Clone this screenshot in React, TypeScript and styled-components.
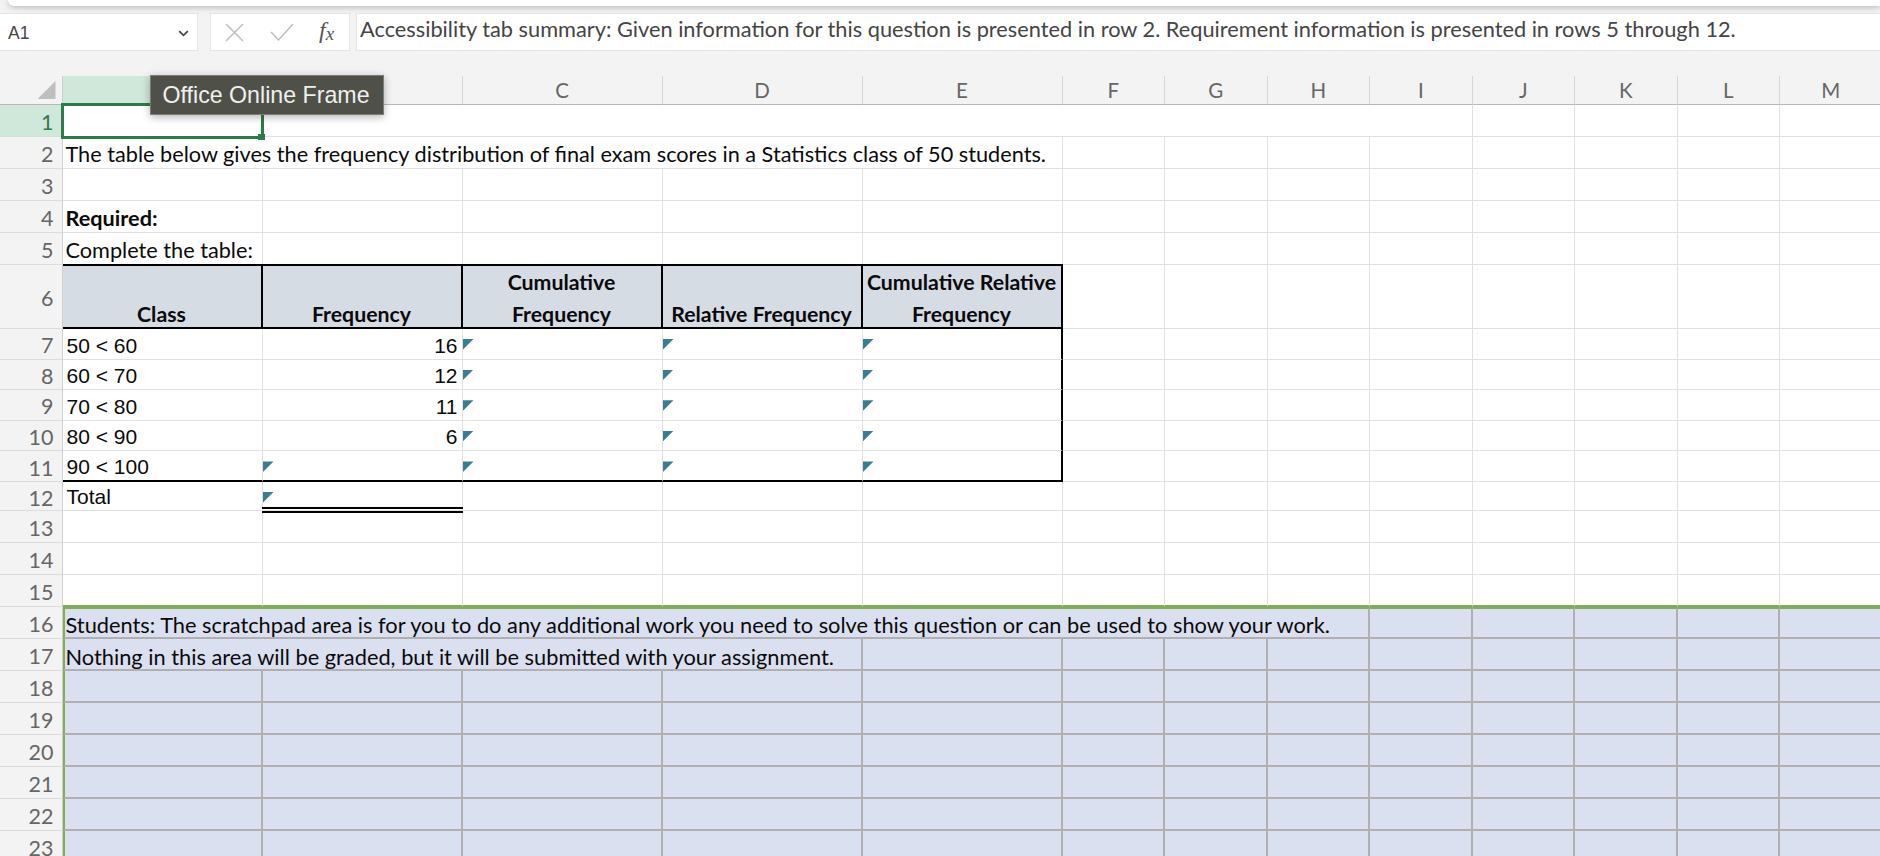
import React from "react";
import styled, { createGlobalStyle } from "styled-components";

const GlobalStyle = createGlobalStyle`
  html, body {
    margin: 0;
    height: 100%;
    overflow: hidden;
    background: #f3f3f3;
  }
  * {
    box-sizing: border-box;
  }
`;

const Page = styled.div`
  width: 1880px;
  height: 856px;
  overflow: hidden;
  background: #f3f3f3;
  font-family: "Lato", "Liberation Sans", sans-serif;
`;

const TopBar = styled.div`
  height: 6px;
  margin: 0 0 7px 8px;
  background: white;
  border-bottom-left-radius: 10px;
  box-shadow: 0 1px 6px rgba(0, 0, 0, 0.28);
`;

const FormulaBar = styled.div`
  display: flex;
  height: 38px;
  margin-bottom: 25px;
`;

const NameBox = styled.div`
  width: 198px;
  display: flex;
  align-items: center;
  justify-content: space-between;
  padding: 2px 8px 0;
  margin-right: 12px;
  background: white;
  border: 1px solid #e4e4e4;
  border-left: none;
  font-family: "Liberation Sans", sans-serif;
  font-size: 17.5px;
  color: #444;
`;

const FxBox = styled.div`
  width: 140px;
  display: flex;
  align-items: center;
  padding-left: 14px;
  margin-right: 6px;
  background: white;
  border: 1px solid #e4e4e4;
`;

const FxLabel = styled.span`
  margin: 0 0 4px 25px;
  font-family: "Liberation Serif", serif;
  font-style: italic;
  font-size: 24px;
  line-height: 24px;
  color: #555;
  > sub {
    font-size: 19px;
    line-height: 0;
    vertical-align: -2px;
  }
`;

const FormulaInput = styled.div`
  flex: 1;
  padding-left: 3px;
  background: white;
  border: 1px solid #e4e4e4;
  border-right: none;
  font-size: 21.78px;
  line-height: 31px;
  color: #444;
  white-space: nowrap;
`;

const Sheet = styled.div`
  display: grid;
  grid-template-columns: 62.5px repeat(5, 200px) repeat(8, 102.5px);
  grid-template-rows:
    29px repeat(5, 32px) 64px repeat(5, 30.6px) 29.5px repeat(3, 31.83px)
    repeat(8, 32px);
`;

const Corner = styled.div`
  display: flex;
  justify-content: flex-end;
  padding: 5px 6px 0 0;
  border-right: 1px solid #cfcfcf;
  border-bottom: 1px solid #b8b8b8;
  > i {
    width: 18px;
    height: 18px;
    background: #bfbfbf;
    clip-path: polygon(100% 0, 100% 100%, 0 100%);
  }
`;

const ColHeader = styled.div<{ $active?: boolean }>`
  position: relative;
  display: flex;
  align-items: center;
  justify-content: center;
  background: ${(p) => (p.$active ? "#cfe8d9" : "transparent")};
  border-right: 1px solid #d6d6d6;
  border-bottom: 1px solid #b8b8b8;
  font-size: 20.5px;
  color: #666;
`;

const Tooltip = styled.div`
  position: absolute;
  left: 87px;
  top: -1px;
  z-index: 5;
  width: 234.5px;
  height: 40px;
  display: flex;
  align-items: center;
  padding-left: 12px;
  background: #4f5148;
  border: 1px solid #7b7d76;
  box-shadow: 0 2px 8px rgba(0, 0, 0, 0.3);
  font-family: "Liberation Sans", sans-serif;
  font-size: 23.2px;
  color: #f0f0ee;
  white-space: nowrap;
`;

const RowHeader = styled.div<{ $active?: boolean }>`
  display: flex;
  align-items: center;
  justify-content: flex-end;
  padding: 3px 8px 0 0;
  background: ${(p) => (p.$active ? "#cfe8d9" : "transparent")};
  border-right: 1px solid #cfcfcf;
  border-bottom: 1px solid #dcdcdc;
  font-size: 21.5px;
  color: ${(p) => (p.$active ? "#2f7a4b" : "#666")};
`;

const Cell = styled.div<{ $span?: number }>`
  position: relative;
  grid-column: span ${(p) => p.$span || 1};
  display: flex;
  align-items: flex-end;
  min-width: 0;
  padding: 0 4px 0 3px;
  background: white;
  border-right: 1px solid #e0e0e0;
  border-bottom: 1px solid #e0e0e0;
  font-size: 21.7px;
  line-height: 27px;
  color: #0a0a0a;
  white-space: nowrap;
`;

const BottomCell = styled(Cell)`
  border-bottom: 2px solid #7fae57;
`;

const HeadCell = styled(Cell)`
  justify-content: center;
  margin-top: -1px;
  padding: 0 2px;
  background: #d6dce4;
  border-top: 2px solid #000;
  border-right: 2px solid #000;
  border-bottom: 2px solid #000;
  font-size: 21.3px;
  font-weight: 700;
  line-height: 32px;
  text-align: center;
`;

const HeadLabel = styled.span`
  display: block;
  margin-bottom: -3px;
`;

const BodyCell = styled(Cell)<{ $right?: boolean; $edge?: boolean; $end?: boolean }>`
  justify-content: ${(p) => (p.$end ? "flex-end" : "flex-start")};
  padding: 0 4px;
  font-family: "Liberation Sans", sans-serif;
  font-size: 21px;
  border-right: ${(p) => (p.$right ? "2px solid #000" : "1px solid #e0e0e0")};
  border-bottom: ${(p) => (p.$edge ? "2px solid #000" : "1px solid #e0e0e0")};
`;

const ScratchCell = styled(Cell)<{ $first?: boolean; $top?: boolean }>`
  background: #dae0f0;
  border-right: 2px solid #b0b0b0;
  border-bottom: 2px solid #b0b0b0;
  border-left: ${(p) => (p.$first ? "2px solid #7fae57" : "none")};
  border-top: ${(p) => (p.$top ? "2px solid #7fae57" : "none")};
  padding-left: ${(p) => (p.$first ? "1px" : "4px")};
  font-size: 21.8px;
  line-height: 25px;
`;

const Selection = styled.div`
  position: absolute;
  left: -2px;
  top: -2px;
  z-index: 3;
  width: 203.5px;
  height: 35.5px;
  border: 3px solid #2f7a4b;
  > i {
    position: absolute;
    right: -4px;
    bottom: -4px;
    width: 7px;
    height: 6px;
    background: #2f7a4b;
  }
`;

const Marker = styled.i`
  position: absolute;
  left: 0;
  top: 10px;
  width: 11px;
  height: 11px;
  background: #3a7d90;
  clip-path: polygon(0 0, 100% 0, 0 100%);
`;

const DoubleLine = styled.i`
  position: absolute;
  z-index: 2;
  left: -1px;
  right: -1px;
  bottom: -3px;
  height: 6px;
  border-top: 2px solid #000;
  border-bottom: 2px solid #000;
`;

const COLUMNS = "ABCDEFGHIJKLM".split("");

const blanks = (count: number, Comp: typeof Cell = Cell) =>
  Array.from({ length: count }, (_, i) => <Comp key={"blank" + i} />);

const CLASSES = [
  ["50 < 60", "16"],
  ["60 < 70", "12"],
  ["70 < 80", "11"],
  ["80 < 90", "6"],
  ["90 < 100", ""],
];

function App() {
  const rows: React.ReactNode[] = [];

  const pushRow = (n: number, cells: React.ReactNode, active?: boolean) => {
    rows.push(
      <React.Fragment key={n}>
        <RowHeader $active={active}>{n}</RowHeader>
        {cells}
      </React.Fragment>
    );
  };

  pushRow(
    1,
    <>
      <Cell $span={9}>
        <Selection>
          <i />
        </Selection>
      </Cell>
      {blanks(4)}
    </>,
    true
  );
  pushRow(
    2,
    <>
      <Cell $span={5}>
        The table below gives the frequency distribution of final exam scores in a Statistics
        class of 50 students.
      </Cell>
      {blanks(8)}
    </>
  );
  pushRow(3, blanks(13));
  pushRow(
    4,
    <>
      <Cell>
        <b>Required:</b>
      </Cell>
      {blanks(12)}
    </>
  );
  pushRow(
    5,
    <>
      <Cell>Complete the table:</Cell>
      {blanks(12)}
    </>
  );
  pushRow(
    6,
    <>
      <HeadCell>
        <HeadLabel>Class</HeadLabel>
      </HeadCell>
      <HeadCell>
        <HeadLabel>Frequency</HeadLabel>
      </HeadCell>
      <HeadCell>
        <HeadLabel>
          Cumulative
          <br />
          Frequency
        </HeadLabel>
      </HeadCell>
      <HeadCell>
        <HeadLabel>Relative Frequency</HeadLabel>
      </HeadCell>
      <HeadCell>
        <HeadLabel>
          Cumulative Relative
          <br />
          Frequency
        </HeadLabel>
      </HeadCell>
      {blanks(8)}
    </>
  );

  CLASSES.forEach(([label, freq], i) => {
    const last = i === CLASSES.length - 1;
    pushRow(
      7 + i,
      <>
        <BodyCell $edge={last}>{label}</BodyCell>
        <BodyCell $edge={last} $end>
          {freq ? freq : <Marker />}
        </BodyCell>
        <BodyCell $edge={last}>
          <Marker />
        </BodyCell>
        <BodyCell $edge={last}>
          <Marker />
        </BodyCell>
        <BodyCell $edge={last} $right>
          <Marker />
        </BodyCell>
        {blanks(8)}
      </>
    );
  });

  pushRow(
    12,
    <>
      <BodyCell>Total</BodyCell>
      <BodyCell>
        <Marker />
        <DoubleLine />
      </BodyCell>
      {blanks(11)}
    </>
  );
  pushRow(13, blanks(13));
  pushRow(14, blanks(13));
  pushRow(15, blanks(13, BottomCell));

  pushRow(
    16,
    <>
      <ScratchCell $span={8} $first $top>
        Students: The scratchpad area is for you to do any additional work you need to solve this
        question or can be used to show your work.
      </ScratchCell>
      {Array.from({ length: 5 }, (_, i) => (
        <ScratchCell key={i} $top />
      ))}
    </>
  );
  pushRow(
    17,
    <>
      <ScratchCell $span={4} $first>
        Nothing in this area will be graded, but it will be submitted with your assignment.
      </ScratchCell>
      {Array.from({ length: 9 }, (_, i) => (
        <ScratchCell key={i} />
      ))}
    </>
  );
  for (let n = 18; n <= 23; n++) {
    pushRow(
      n,
      COLUMNS.map((c, i) => <ScratchCell key={c} $first={i === 0} />)
    );
  }

  return (
    <Page>
      <GlobalStyle />
      <TopBar />
      <FormulaBar>
        <NameBox>
          A1
          <svg width="11" height="7" viewBox="0 0 11 7" fill="none">
            <path d="M1.2 1.2 5.5 5.4 9.8 1.2" stroke="#444" strokeWidth="1.7" />
          </svg>
        </NameBox>
        <FxBox>
          <svg width="19" height="19" viewBox="0 0 19 19" fill="none">
            <path d="M1 1 18 18M18 1 1 18" stroke="#bcbcbc" strokeWidth="1.4" />
          </svg>
          <svg width="24" height="18" viewBox="0 0 24 18" fill="none" style={{ marginLeft: 26 }}>
            <path d="M1 9 8.5 17 23 1" stroke="#bcbcbc" strokeWidth="1.4" />
          </svg>
          <FxLabel>
            f<sub>x</sub>
          </FxLabel>
        </FxBox>
        <FormulaInput>
          Accessibility tab summary: Given information for this question is presented in row 2.
          Requirement information is presented in rows 5 through 12.
        </FormulaInput>
      </FormulaBar>
      <Sheet>
        <Corner>
          <i />
        </Corner>
        {COLUMNS.map((c, i) => (
          <ColHeader key={c} $active={i === 0}>
            {/* the tooltip sits over the A and B letters in this state */}
            {i > 1 && c}
            {i === 0 && <Tooltip>Office Online Frame</Tooltip>}
          </ColHeader>
        ))}
        {rows}
      </Sheet>
    </Page>
  );
}

export default App;
